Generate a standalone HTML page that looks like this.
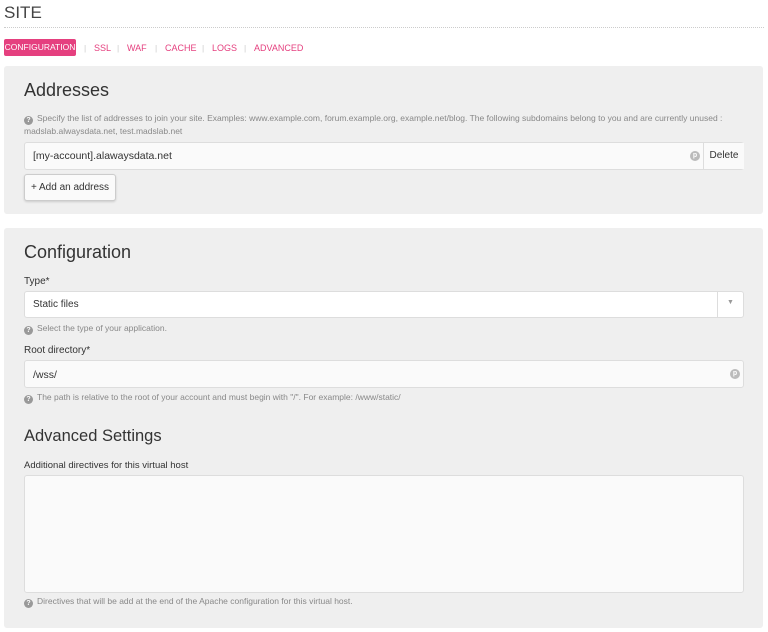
<html><head><style>
body{margin:0;width:768px;height:632px;background:#fff;font-family:"Liberation Sans",sans-serif;color:#333;position:relative;overflow:hidden}
.a{position:absolute}
.panel{position:absolute;left:4px;width:759px;background:#efefef;border-radius:3px}
.help{font-size:8.5px;color:#888}
.q{display:inline-block;width:9px;height:9px;border-radius:50%;background:#999;color:#fff;font-size:7px;text-align:center;line-height:9px;font-weight:bold;vertical-align:-1px;margin-right:4px}
.inp{position:absolute;left:24px;width:720px;background:#fafafa;border:1px solid #ddd;border-radius:3px;font-size:10.5px;color:#333;box-sizing:border-box}
.lab{font-size:10px;color:#333}
.h{font-size:18px;color:#333}
.tab{position:absolute;top:43px;font-size:9px;color:#e5407f}
.sep{position:absolute;top:43px;font-size:8.5px;color:#ccc}
.pi{position:absolute;width:10px;height:10px;border-radius:50%;background:#bbb;color:#fff;font-size:7px;line-height:10px;text-align:center;font-weight:bold}
</style></head><body>
<div class="a" style="left:4px;top:3px;font-size:17px;color:#444">SITE</div>
<div class="a" style="left:4px;top:27px;width:760px;border-top:1px dotted #ccc"></div>
<div class="a" style="left:4px;top:39px;width:72px;height:17px;background:#e5407f;border-radius:2px;color:#fff;font-size:8.5px;line-height:17px;text-align:center">CONFIGURATION</div>
<span class="sep" style="left:84px">|</span><span class="tab" style="left:94px">SSL</span>
<span class="sep" style="left:117px">|</span><span class="tab" style="left:127px">WAF</span>
<span class="sep" style="left:155px">|</span><span class="tab" style="left:165px">CACHE</span>
<span class="sep" style="left:202px">|</span><span class="tab" style="left:212px">LOGS</span>
<span class="sep" style="left:244px">|</span><span class="tab" style="left:254px">ADVANCED</span>

<div class="panel" style="top:66px;height:148px"></div>
<div class="a h" style="left:24px;top:80px">Addresses</div>
<div class="a help" style="left:24px;top:112px;width:730px;line-height:12px"><span class="q">?</span>Specify the list of addresses to join your site. Examples: www.example.com, forum.example.org, example.net/blog. The following subdomains belong to you and are currently unused :<br>madslab.alwaysdata.net, test.madslab.net</div>
<div class="inp" style="top:142px;height:28px;padding:7px 0 0 8px">[my-account].alawaysdata.net</div>
<div class="pi" style="left:690px;top:151px">p</div>
<div class="a" style="left:703px;top:143px;width:40px;height:26px;border-left:1px solid #ddd;font-size:10px;line-height:26px;text-align:center;background:#fafafa">Delete</div>
<div class="a" style="left:24px;top:174px;width:92px;height:27px;background:#fafafa;border:1px solid #ccc;border-radius:3px;box-shadow:0 1px 2px rgba(0,0,0,.15);box-sizing:border-box;font-size:10px;line-height:25px;text-align:center">+ Add an address</div>

<div class="panel" style="top:228px;height:400px"></div>
<div class="a h" style="left:24px;top:242px">Configuration</div>
<div class="a lab" style="left:24px;top:276px">Type*</div>
<div class="inp" style="top:291px;height:27px;background:#fff;padding:7px 0 0 8px;font-size:10px">Static files</div>
<div class="a" style="left:717px;top:292px;width:1px;height:25px;background:#ddd"></div>
<div class="a" style="left:727px;top:299px;font-size:7px;color:#999">▼</div>
<div class="a help" style="left:24px;top:323px"><span class="q">?</span>Select the type of your application.</div>
<div class="a lab" style="left:24px;top:345px">Root directory*</div>
<div class="inp" style="top:360px;height:28px;padding:8px 0 0 8px">/wss/</div>
<div class="pi" style="left:730px;top:369px">p</div>
<div class="a help" style="left:24px;top:392px"><span class="q">?</span>The path is relative to the root of your account and must begin with "/". For example: /www/static/</div>
<div class="a h" style="left:24px;top:427px;font-size:16.5px">Advanced Settings</div>
<div class="a lab" style="left:24px;top:460px;font-size:9.5px">Additional directives for this virtual host</div>
<div class="inp" style="top:475px;height:118px"></div>
<div class="a help" style="left:24px;top:596px"><span class="q">?</span>Directives that will be add at the end of the Apache configuration for this virtual host.</div>
</body></html>
